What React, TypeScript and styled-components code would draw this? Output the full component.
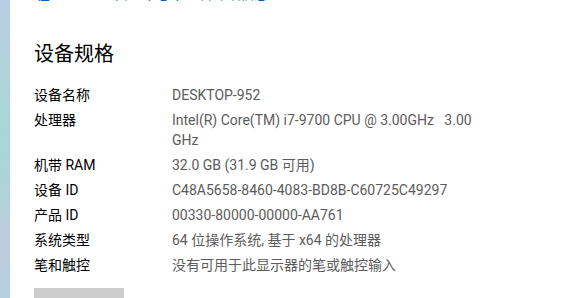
import React from "react";
import styled, { createGlobalStyle } from "styled-components";

const Global = createGlobalStyle`
  html, body { margin: 0; padding: 0; background: #ffffff; }
  body { font-family: Roboto, "Noto Sans CJK SC", sans-serif; overflow: hidden; }
`;

const Page = styled.div`
  display: flex;
  width: 573px;
  height: 298px;
  overflow: hidden;
`;

const Wallpaper = styled.div`
  width: 10px;
  flex: none;
  background: linear-gradient(180deg, #b9cde6 0%, #aad6d5 40%, #acd3db 60%, #bccddc 80%, #b5cfe2 100%);
`;

const Content = styled.div`
  flex: 1;
  padding-left: 24px;
  display: flex;
  flex-direction: column;
`;

const Link = styled.a`
  display: block;
  margin-top: -16px;
  padding-left: 2px;
  font-size: 14px;
  line-height: 20px;
  color: #0067c0;
  text-decoration: none;
  font-family: Roboto, "Noto Sans CJK SC", sans-serif;
`;

const Title = styled.h2`
  margin: 35px 0 0 0;
  font-size: 20px;
  line-height: 28px;
  font-weight: 400;
  color: #000000;
  font-family: "Noto Sans CJK SC", sans-serif;
`;

const Specs = styled.div`
  display: grid;
  grid-template-columns: 138px 300px;
  row-gap: 5px;
  margin-top: 18px;
  font-size: 14px;
  line-height: 20px;
`;

const Label = styled.div`
  color: #000000;
  font-family: Roboto, "Noto Sans CJK SC", sans-serif;
`;

const Value = styled.div`
  color: #5c5c5c;
  font-family: Roboto, "Noto Sans CJK SC", sans-serif;
  white-space: pre-wrap;
`;

const CopyButton = styled.div`
  margin-top: 13px;
  width: 90px;
  height: 32px;
  background: #cccccc;
`;

const specs: [string, string][] = [
  ["设备名称", "DESKTOP-952"],
  ["处理器", "Intel(R) Core(TM) i7-9700 CPU @ 3.00GHz   3.00 GHz"],
  ["机带 RAM", "32.0 GB (31.9 GB 可用)"],
  ["设备 ID", "C48A5658-8460-4083-BD8B-C60725C49297"],
  ["产品 ID", "00330-80000-00000-AA761"],
  ["系统类型", "64 位操作系统, 基于 x64 的处理器"],
  ["笔和触控", "没有可用于此显示器的笔或触控输入"],
];

export default function App() {
  return (
    <Page>
      <Global />
      <Wallpaper />
      <Content>
        <Link href="#">在 Windows 安全中心中查看详细信息</Link>
        <Title>设备规格</Title>
        <Specs>
          {specs.map(([k, v]) => (
            <React.Fragment key={k}>
              <Label>{k}</Label>
              <Value>{v}</Value>
            </React.Fragment>
          ))}
        </Specs>
        <CopyButton />
      </Content>
    </Page>
  );
}
